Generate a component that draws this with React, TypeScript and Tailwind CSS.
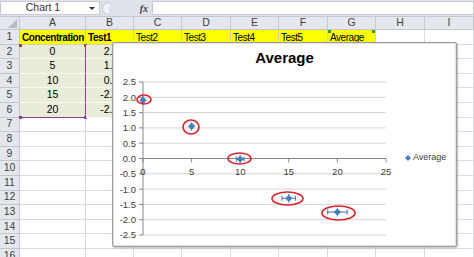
import React from 'react'

const cols = [
  { label: '', w: 20 },
  { label: 'A', w: 66 },
  { label: 'B', w: 48 },
  { label: 'C', w: 48 },
  { label: 'D', w: 49 },
  { label: 'E', w: 48 },
  { label: 'F', w: 49 },
  { label: 'G', w: 48 },
  { label: 'H', w: 49 },
  { label: 'I', w: 49 },
]

const headerRow = ['Concentration', 'Test1', 'Test2', 'Test3', 'Test4', 'Test5', 'Average']
const dataRows = [
  ['0', '2.013'],
  ['5', '1.047'],
  ['10', '0.015'],
  ['15', '-2.053'],
  ['20', '-2.167'],
]

// chart data: x, y average, x error
const points = [
  { x: 0, y: 1.9, e: 0.12 },
  { x: 5, y: 1.05, e: 0.12 },
  { x: 10, y: -0.02, e: 0.4 },
  { x: 15, y: -1.3, e: 0.7 },
  { x: 20, y: -1.75, e: 1.0 },
]

const rings = [
  { cx: 31, cy: 26.5, rx: 7, ry: 4.5 },
  { cx: 78, cy: 54, rx: 8, ry: 7 },
  { cx: 126.5, cy: 85.5, rx: 11.5, ry: 5.5 },
  { cx: 174.5, cy: 125.5, rx: 15.5, ry: 6.5 },
  { cx: 225.5, cy: 140, rx: 16.5, ry: 7 },
]

const sx = (v: number) => 30 + v * 9.72
const sy = (v: number) => 85.5 - v * 30.6

function Plot() {
  const yTicks = [2.5, 2, 1.5, 1, 0.5, 0, -0.5, -1, -1.5, -2, -2.5]
  const xTicks = [0, 5, 10, 15, 20, 25]
  return (
    <svg width="286" height="170" viewBox="0 0 286 170" className="block shrink-0">
      {yTicks.map(v => (
        <g key={v}>
          {v !== 0 && <line x1={sx(0)} x2={sx(25)} y1={sy(v)} y2={sy(v)} stroke="#d4d4d4" strokeWidth="1" />}
          <line x1={sx(0) - 4} x2={sx(0)} y1={sy(v)} y2={sy(v)} stroke="#868686" strokeWidth="1" />
          <text x="23" y={sy(v) + 3.4} textAnchor="end" fontSize="9.5" fill="#404040" fontFamily="Liberation Sans, Arial, sans-serif">
            {v.toFixed(1)}
          </text>
        </g>
      ))}
      <line x1={sx(0)} x2={sx(0)} y1={sy(2.5)} y2={sy(-2.5)} stroke="#868686" strokeWidth="1" />
      <line x1={sx(0)} x2={sx(25)} y1={sy(0)} y2={sy(0)} stroke="#868686" strokeWidth="1" />
      {xTicks.map(v => (
        <g key={v}>
          <line x1={sx(v)} x2={sx(v)} y1={sy(0)} y2={sy(0) + 4} stroke="#868686" strokeWidth="1" />
          <text x={sx(v)} y="101.5" textAnchor="middle" fontSize="9.5" fill="#404040" fontFamily="Liberation Sans, Arial, sans-serif">
            {v}
          </text>
        </g>
      ))}
      {points.map(p => {
        const cx = sx(p.x)
        const cy = sy(p.y)
        const x1 = sx(p.x - p.e)
        const x2 = sx(p.x + p.e)
        return (
          <g key={p.x}>
            <line x1={x1} x2={x2} y1={cy} y2={cy} stroke="#4a6d9c" strokeWidth="1" />
            <line x1={x1} x2={x1} y1={cy - 2.5} y2={cy + 2.5} stroke="#4a6d9c" strokeWidth="1" />
            <line x1={x2} x2={x2} y1={cy - 2.5} y2={cy + 2.5} stroke="#4a6d9c" strokeWidth="1" />
            <line x1={cx} x2={cx} y1={cy - 4.5} y2={cy + 4.5} stroke="#4a6d9c" strokeWidth="0.8" />
            <path d={`M${cx} ${cy - 3.6}L${cx + 3.6} ${cy}L${cx} ${cy + 3.6}L${cx - 3.6} ${cy}Z`} fill="#4a7ebb" />
          </g>
        )
      })}
      {rings.map((r, i) => (
        <ellipse key={i} cx={r.cx} cy={r.cy} rx={r.rx} ry={r.ry} fill="none" stroke="#dc2128" strokeWidth="1.6" />
      ))}
    </svg>
  )
}

function Chart() {
  return (
    <div className="absolute left-[112px] top-[42px] w-[345px] h-[205px] bg-white border border-[#9c9c9c] rounded-[2px] shadow-[inset_0_0_0_1px_#e4e4e4,1px_1px_2px_rgba(0,0,0,0.25)]">
      <div className="h-[30px] pt-[6px] text-center text-[15px] leading-[18px] font-bold text-black">Average</div>
      <div className="flex items-center">
        <Plot />
        <div className="flex items-center gap-[2px] pl-[6px] text-[9px] text-[#404040]">
          <svg width="6" height="6" viewBox="0 0 6 6">
            <path d="M3 0L6 3L3 6L0 3Z" fill="#4a7ebb" />
          </svg>
          <span>Average</span>
        </div>
      </div>
    </div>
  )
}

export default function App() {
  return (
    <div className="relative w-[474px] h-[257px] overflow-hidden bg-white font-['Liberation_Sans',Arial,sans-serif] text-black">
      {/* formula bar */}
      <div className="h-[16px] flex items-start bg-[#dfe3e9] pt-[1px]">
        <div className="relative w-[100px] h-[14px] bg-white border border-[#c6cbd2] flex items-center justify-center text-[10.5px] text-[#333]">
          <span className="-ml-[14px]">Chart 1</span>
          <span className="absolute right-[4px] top-[5px] w-0 h-0 border-l-[3px] border-r-[3px] border-t-[3px] border-l-transparent border-r-transparent border-t-[#333]" />
        </div>
        <div className="w-[52px] h-[14px] flex items-center">
          <div className="ml-[2px] w-[7px] h-[13px] rounded-l-full border border-r-0 border-[#c3c8cf] bg-[#f1f3f6]" />
          <span className="ml-auto mr-[4px] text-[10px] italic font-['Liberation_Serif',serif] font-bold text-[#444]">fx</span>
        </div>
        <div className="flex-1 h-[14px] bg-white border border-[#c6cbd2]" />
      </div>

      {/* grid */}
      <div className="grid grid-cols-[20px_66px_48px_48px_49px_48px_49px_48px_49px_49px]">
        {cols.map((c, i) => (
          <div
            key={i}
            className="relative h-[14px] flex items-center justify-center bg-[#e4e8ed] border-r border-b border-t border-[#c2c7ce] text-[10.5px] text-[#404040]"
          >
            {i === 0 ? (
              <svg width="9" height="9" viewBox="0 0 9 9" className="absolute right-[2px] bottom-[1px]">
                <path d="M9 0L9 9L0 9Z" fill="#b4bbc4" />
              </svg>
            ) : (
              c.label
            )}
          </div>
        ))}

        {Array.from({ length: 16 }).map((_, r) => {
          const rowNum = r + 1
          return cols.map((c, ci) => {
            if (ci === 0) {
              return (
                <div
                  key={`${r}-${ci}`}
                  className="h-[14.6px] flex items-center justify-center bg-[#e4e8ed] border-r border-b border-[#c2c7ce] text-[10.5px] text-[#404040]"
                >
                  {rowNum}
                </div>
              )
            }
            if (rowNum === 1 && ci <= 7) {
              return (
                <div
                  key={`${r}-${ci}`}
                  className={`relative h-[14.6px] flex items-end pl-[2px] bg-[#ffff00] border-r border-b border-[#d4d4b0] text-[10px] leading-[12px] tracking-[-0.45px] overflow-hidden whitespace-nowrap ${ci <= 2 ? 'font-bold' : ''}`}
                >
                  {headerRow[ci - 1]}
                  {ci === 7 && (
                    <>
                      <span className="absolute left-0 top-0 w-[3px] h-[3px] bg-[#3e9a3e]" />
                      <span className="absolute right-0 top-0 w-[3px] h-[3px] bg-[#3e9a3e]" />
                    </>
                  )}
                </div>
              )
            }
            if (rowNum >= 2 && rowNum <= 6 && ci <= 2) {
              const val = dataRows[rowNum - 2][ci - 1]
              const isA = ci === 1
              return (
                <div
                  key={`${r}-${ci}`}
                  className={`relative h-[14.6px] flex items-center bg-[#e9ecd8] text-[10.5px] whitespace-nowrap ${
                    isA
                      ? `justify-center border-r border-r-[#8e3b9c] ${rowNum === 6 ? 'border-b border-b-[#8e3b9c]' : 'border-b border-b-[#f7f8f0]'}`
                      : 'justify-end pr-[3px] border-r border-[#d8dbc7] border-b border-b-[#f7f8f0]'
                  }`}
                >
                  {val}
                  {isA && rowNum === 2 && (
                    <>
                      <span className="absolute -left-[1px] -top-[1px] w-[3px] h-[3px] bg-[#8e3b9c]" />
                      <span className="absolute -right-[2px] -top-[1px] w-[3px] h-[3px] bg-[#8e3b9c]" />
                    </>
                  )}
                  {isA && rowNum === 6 && (
                    <>
                      <span className="absolute -left-[1px] -bottom-[2px] w-[3px] h-[3px] bg-[#8e3b9c]" />
                      <span className="absolute -right-[2px] -bottom-[2px] w-[3px] h-[3px] bg-[#8e3b9c]" />
                    </>
                  )}
                </div>
              )
            }
            return <div key={`${r}-${ci}`} className="h-[14.6px] border-r border-b border-[#dadcdf]" />
          })
        })}
      </div>

      <Chart />
    </div>
  )
}
